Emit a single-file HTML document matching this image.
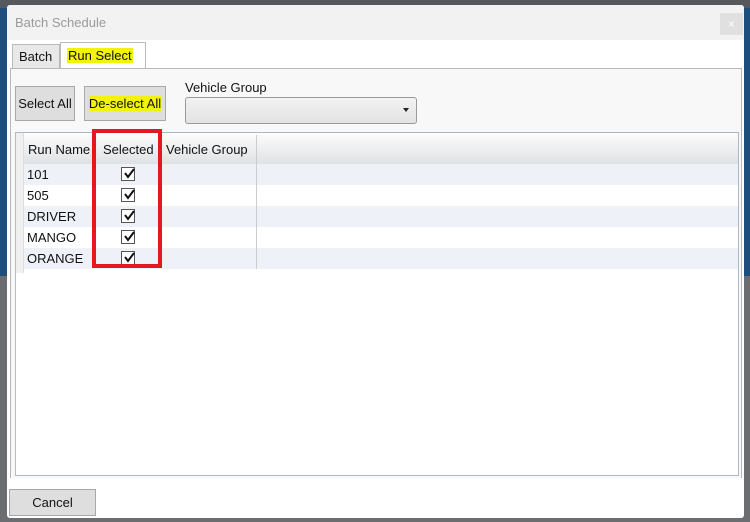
<!DOCTYPE html>
<html><head><style>
*{margin:0;padding:0;box-sizing:border-box}
body{width:750px;height:522px;position:relative;overflow:hidden;background:#6b6d70;font-family:"Liberation Sans",sans-serif;font-size:13px;color:#111}
.abs{position:absolute}
.btn{position:absolute;background:#dedede;border:1px solid #a8a8a8;display:flex;align-items:center;justify-content:center;font-size:13px}
.hl{background:#f2f20a}
.row{position:absolute;left:0;width:232px;height:21px;}
.cb{position:absolute;left:97px;top:3px;width:14px;height:14px;border:1px solid #555;background:#fff}
.cell{position:absolute;left:3px;top:3px;font-size:13px}
</style></head><body>
<div class="abs" style="left:0;top:0;width:750px;height:8px;background:#55585c"></div>
<div class="abs" style="left:0;top:8px;width:8px;height:268px;background:#1d4f7c"></div>
<div class="abs" style="left:742px;top:8px;width:8px;height:268px;background:#1d4f7c"></div>
<div class="abs" style="left:7px;top:5px;width:737px;height:513px;background:#fff;border-radius:3px;overflow:hidden">
 <div class="abs" style="left:0;top:0;width:737px;height:35px;background:#f2f2f2"></div>
 <div class="abs" style="left:8px;top:10px;color:#9a9a9a;font-size:13px">Batch Schedule</div>
 <div class="abs" style="left:713px;top:8px;width:23px;height:22px;background:#e0e0e0;color:#fff;text-align:center;line-height:22px;font-size:12px">×</div>
 <div class="abs" style="left:5px;top:39px;width:48px;height:24px;background:#e8e8e8;border:1px solid #bbb;border-bottom:none"></div>
 <div class="abs" style="left:12px;top:44px;font-size:13px">Batch</div>
 <div class="abs" style="left:53px;top:37px;width:86px;height:27px;background:#fff;border:1px solid #bbb;border-bottom:none"></div>
 <div class="abs hl" style="left:60px;top:43px;padding:0 1px;font-size:13px;line-height:15px">Run Select</div>
 <div class="abs" style="left:3px;top:63px;width:732px;height:410px;background:#f8f8f8;border:1px solid #b8b8b8;border-bottom:none"></div>
 <div class="btn" style="left:8px;top:81px;width:60px;height:35px">Select All</div>
 <div class="btn" style="left:77px;top:81px;width:82px;height:35px"><span class="hl">De-select All</span></div>
 <div class="abs" style="left:178px;top:75px;font-size:13px">Vehicle Group</div>
 <div class="abs" style="left:178px;top:92px;width:232px;height:27px;border:1px solid #999;border-radius:3px;background:linear-gradient(#f2f2f2,#e3e3e3)"></div>
 <div class="abs" style="left:396px;top:103px;width:0;height:0;border-left:3px solid transparent;border-right:3px solid transparent;border-top:4px solid #222"></div>
 <div class="abs" style="left:8px;top:127px;width:724px;height:344px;background:#fff;border:1px solid #a9b9cc;border-left-color:#bbb">
  <div class="abs" style="left:0;top:0;width:8px;height:140px;background:#f0f0f0;border-right:1px solid #ddd"></div>
  <div class="abs" style="left:8px;top:2px;width:714px;height:29px;background:linear-gradient(#fafafa,#dfe2e5)"></div>
  <div class="abs" style="left:12px;top:9px">Run Name</div>
  <div class="abs" style="left:87px;top:9px">Selected</div>
  <div class="abs" style="left:150px;top:9px">Vehicle Group</div>
  <div class="abs" style="left:8px;top:31px">
   <div class="row" style="top:0;background:#eef2f8"><span class="cell">101</span><div class="cb"></div></div>
   <div class="row" style="top:21px"><span class="cell">505</span><div class="cb"></div></div>
   <div class="row" style="top:42px;background:#eef2f8"><span class="cell">DRIVER</span><div class="cb"></div></div>
   <div class="row" style="top:63px"><span class="cell">MANGO</span><div class="cb"></div></div>
   <div class="row" style="top:84px;background:#eef2f8"><span class="cell">ORANGE</span><div class="cb"></div></div>
  </div>
  <div class="abs" style="left:240px;top:31px;width:482px;height:21px;background:#eef2f8"></div>
  <div class="abs" style="left:240px;top:73px;width:482px;height:21px;background:#eef2f8"></div>
  <div class="abs" style="left:240px;top:115px;width:482px;height:21px;background:#eef2f8"></div>
  <div class="abs" style="left:240px;top:2px;width:1px;height:134px;background:#ccc"></div>
  <svg class="abs" style="left:0;top:0" width="200" height="140">
   <g fill="none" stroke="#111" stroke-width="2">
    <path d="M109 40 l3 4 l6 -8"/><path d="M109 61 l3 4 l6 -8"/><path d="M109 82 l3 4 l6 -8"/><path d="M109 103 l3 4 l6 -8"/><path d="M109 124 l3 4 l6 -8"/>
   </g>
  </svg>
 </div>
 <div class="abs" style="left:85px;top:124px;width:70px;height:139px;border:4px solid #e3191f"></div>
 <div class="btn" style="left:2px;top:484px;width:87px;height:27px">Cancel</div>
</div>
</body></html>
